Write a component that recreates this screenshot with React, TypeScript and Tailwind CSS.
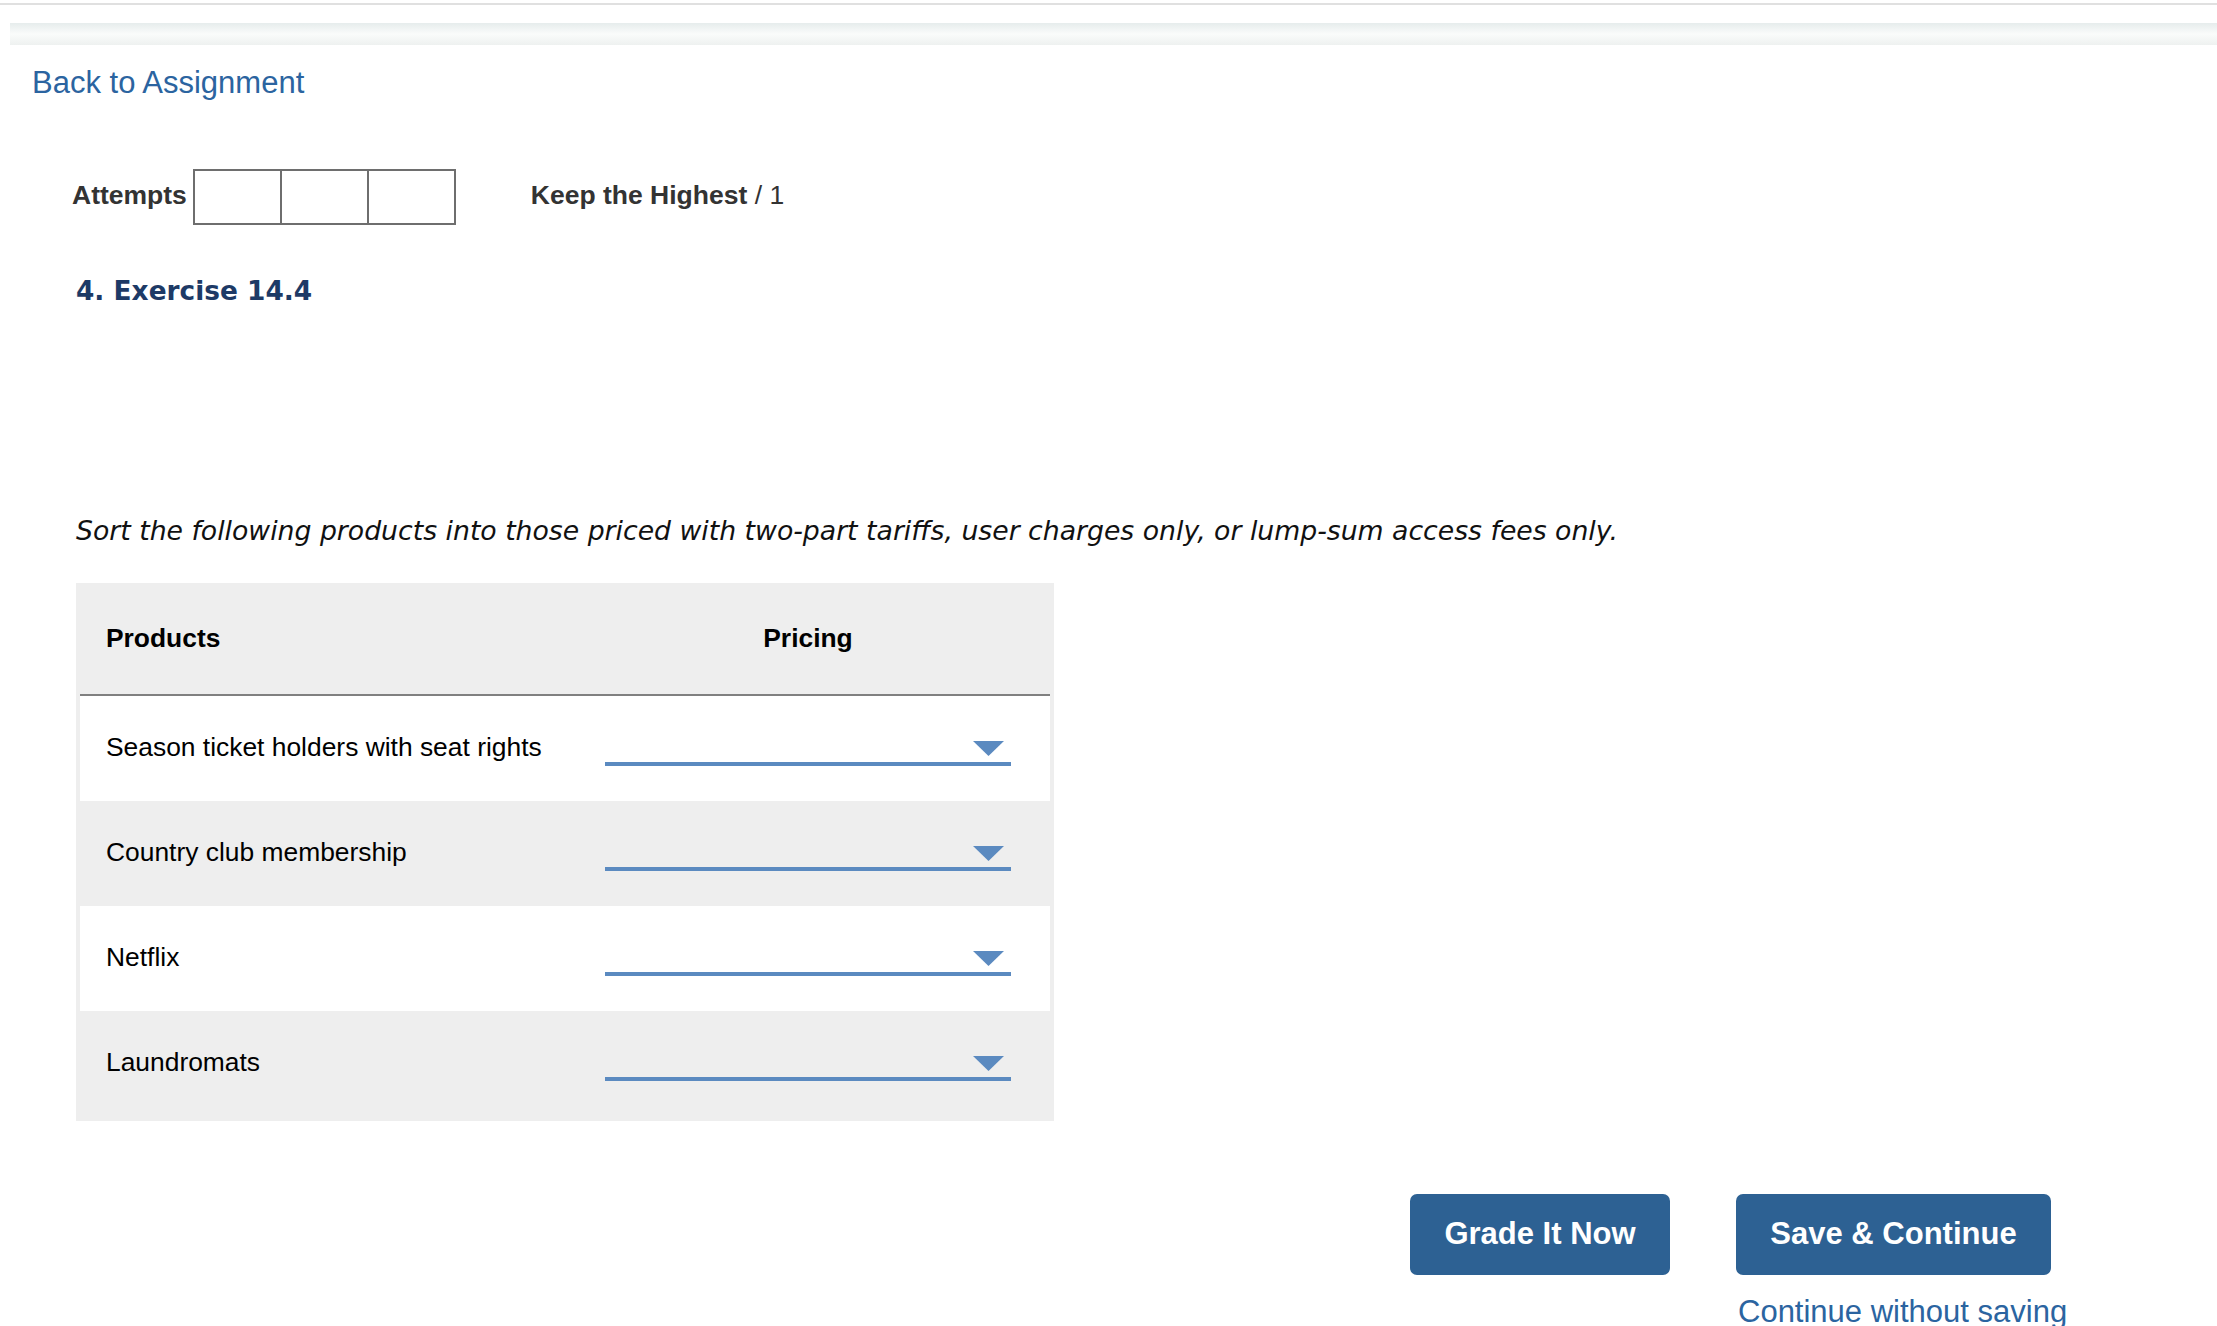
import { useState } from "react";

const products = [
  { name: "Season ticket holders with seat rights", bg: "bg-white" },
  { name: "Country club membership", bg: "bg-[#eeeeee]" },
  { name: "Netflix", bg: "bg-white" },
  { name: "Laundromats", bg: "bg-[#eeeeee]" },
];

const sans = "font-['Liberation_Sans',Arial,sans-serif]";
const verdana = "font-['DejaVu_Sans',Verdana,sans-serif]";

function Dropdown() {
  return (
    <div className="self-start h-[70px] w-[406px] border-b-4 border-[#5b8ac0] flex items-end justify-end pb-[6px] pr-[7px] cursor-pointer">
      <svg width="31" height="15" viewBox="0 0 31 15">
        <polygon points="0,0 31,0 15.5,15" fill="#5b8ac0" />
      </svg>
    </div>
  );
}

export default function App() {
  const [attempts] = useState([0, 1, 2]);

  return (
    <div className={`min-h-screen bg-white text-[#222] ${sans}`}>
      {/* top rule + band */}
      <div className="pt-[3px]">
        <div className="h-[2px] bg-[#e0e0e0]" />
      </div>
      <div className="ml-[10px] mt-[18px] h-[22px] bg-gradient-to-b from-[#e6ecec] via-[#fafcfb] to-[#eef1f0]" />

      <div className="pl-[32px] mt-[22px]">
        <a href="#" className="text-[31px] leading-none text-[#2b64a0]">
          Back to Assignment
        </a>
      </div>

      {/* attempts */}
      <div className="mt-[69px] pl-[72px] flex items-center h-[56px] text-[26.5px] leading-none text-[#333]">
        <span className="font-bold mr-[6px] pb-[4px]">Attempts</span>
        <div className="flex">
          {attempts.map((a) => (
            <div
              key={a}
              className={`w-[89px] h-[56px] border-2 border-[#6e6e6e] ${a > 0 ? "-ml-[2px]" : ""}`}
            />
          ))}
        </div>
        <span className="ml-[75px] pb-[4px]">
          <span className="font-bold">Keep the Highest</span> / 1
        </span>
      </div>

      <h2 className={`mt-[53px] pl-[76px] text-[26.4px] leading-none font-bold text-[#1d3a66] ${verdana}`}>
        4. Exercise 14.4
      </h2>

      <p className={`mt-[214px] pl-[76px] text-[26.7px] leading-none italic text-[#111] ${verdana}`}>
        Sort the following products into those priced with two-part tariffs, user charges only, or lump-sum access fees only.
      </p>

      {/* table */}
      <div className="mt-[38px] ml-[76px] w-[978px] bg-[#eeeeee] px-[4px] pb-[5px] text-[26.4px] leading-none text-black">
        <div className="flex items-center h-[111px] pl-[26px] font-bold">
          <div className="w-[499px]">Products</div>
          <div className="w-[406px] text-center">Pricing</div>
        </div>
        <div className="h-[2px] bg-[#808080]" />
        {products.map((p) => (
          <div key={p.name} className={`flex items-center h-[105px] pl-[26px] ${p.bg}`}>
            <div className="w-[499px] pb-[3px]">{p.name}</div>
            <Dropdown />
          </div>
        ))}
      </div>

      {/* actions */}
      <div className="mt-[73px] flex justify-end pr-[166px]">
        <div className="flex items-start gap-[66px]">
          <button className="w-[260px] h-[81px] rounded-[7px] bg-[#2d6193] text-white text-[31px] font-bold">
            Grade It Now
          </button>
          <div className="flex flex-col w-[315px]">
            <button className="w-[315px] h-[81px] rounded-[7px] bg-[#2d6193] text-white text-[31px] font-bold">
              Save &amp; Continue
            </button>
            <a href="#" className="mt-[21px] pl-[2px] whitespace-nowrap text-[31px] leading-none text-[#2b64a0]">
              Continue without saving
            </a>
          </div>
        </div>
      </div>
    </div>
  );
}
